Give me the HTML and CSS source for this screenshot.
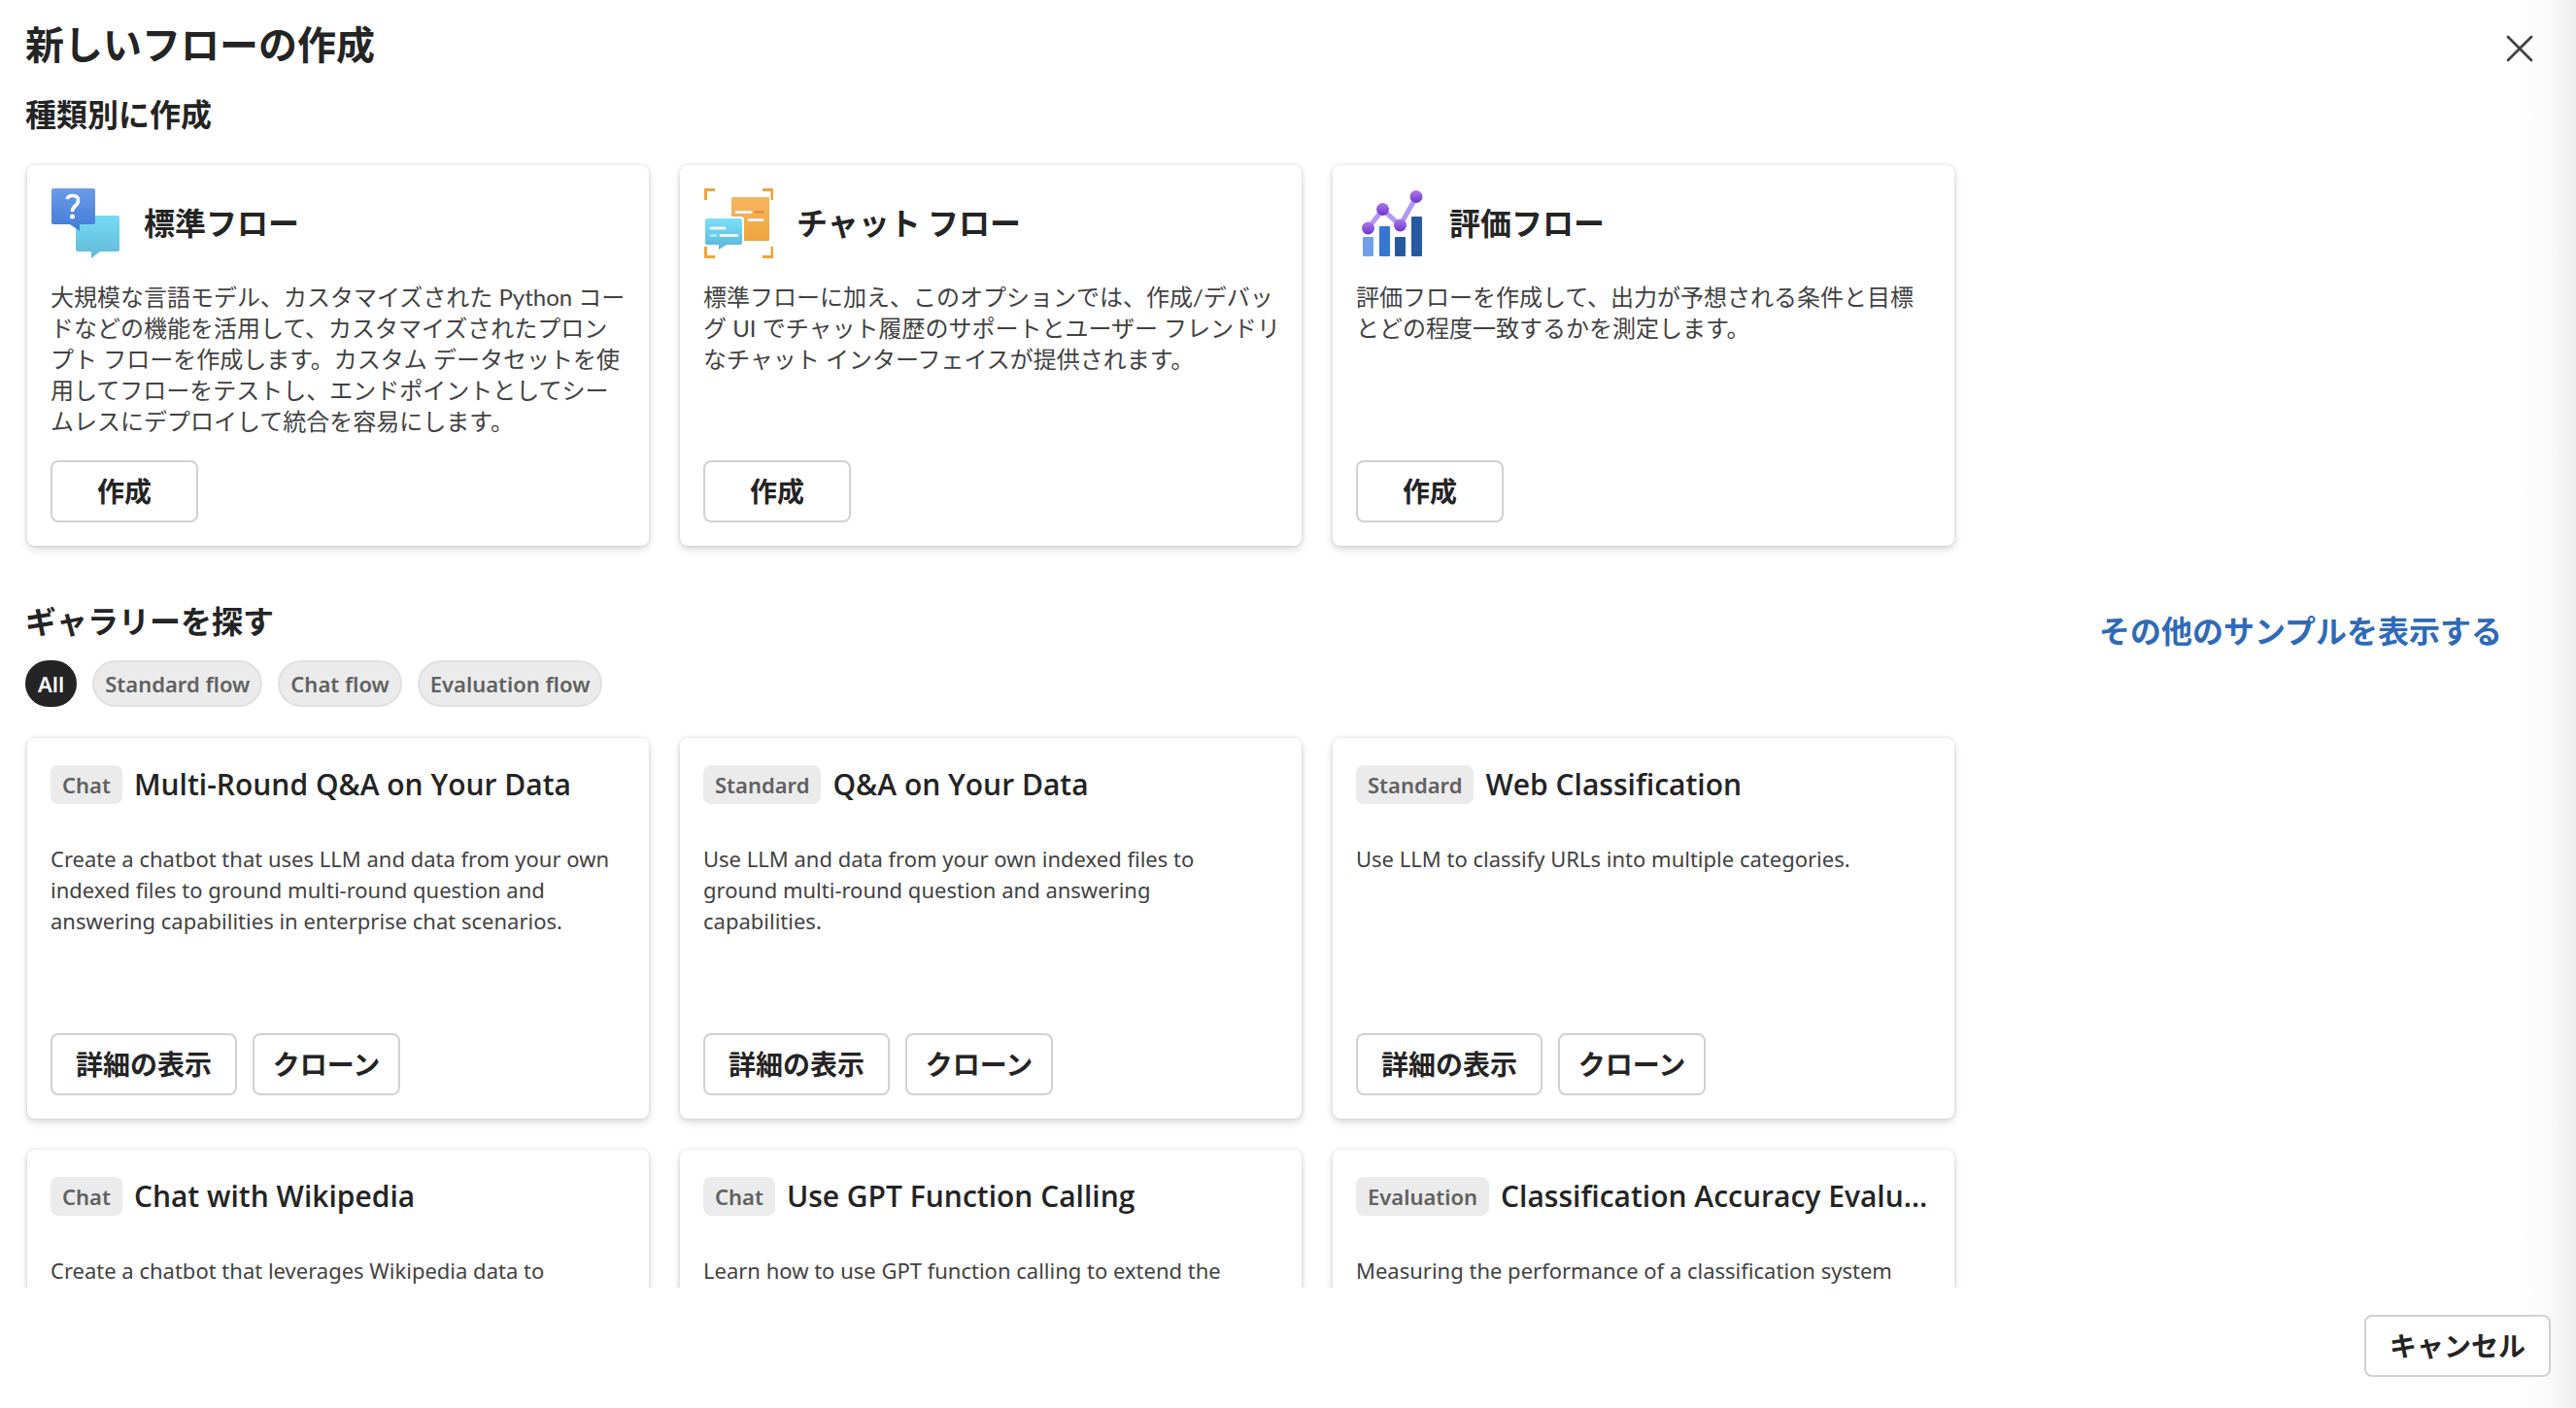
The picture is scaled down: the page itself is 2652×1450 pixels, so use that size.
FILE: index.html
```
<!DOCTYPE html>
<html lang="ja">
<head>
    <meta charset="UTF-8">
    <meta name="viewport" content="width=device-width, initial-scale=1.0">
    <title>新しいフローの作成</title>
    <link rel="stylesheet" href="styles.css">
</head>
<body>

<div class="panel">
    <header class="panel-header">
        <h1>新しいフローの作成</h1>
        <button type="button" class="close-btn" aria-label="閉じる">
            <svg viewBox="0 0 28 28" width="28" height="28"><path d="M2 2L26 26M26 2L2 26" fill="none" stroke="#424242" stroke-width="2.8" stroke-linecap="round"/></svg>
        </button>
    </header>

    <main class="panel-body">
        <h2>種類別に作成</h2>
        <div class="card-grid">
            <section class="card">
                <div class="card-head">
                    <svg class="flow-icon" viewBox="0 0 72 72">
                        <defs>
                            <linearGradient id="std-blue" x1="0" y1="0" x2="0" y2="1"><stop offset="0" stop-color="#6b9be8"/><stop offset="1" stop-color="#3f7bd6"/></linearGradient>
                            <linearGradient id="std-cyan" x1="0" y1="0" x2="0" y2="1"><stop offset="0" stop-color="#77dbf4"/><stop offset="1" stop-color="#62b9d9"/></linearGradient>
                        </defs>
                        <path d="M28 28H69Q71 28 71 30V63Q71 65 69 65H51L42 72V65H28Q26 65 26 63V30Q26 28 28 28Z" fill="url(#std-cyan)"/>
                        <path d="M3 0H44Q46 0 46 2V35Q46 37 44 37H30V44L20 37H3Q1 37 1 35V2Q1 0 3 0Z" fill="url(#std-blue)"/>
                        <path d="M17 11Q18 7.500 23 7.500Q28.500 7.500 28.500 12.500Q28.500 15.500 25.500 18Q22.500 20.500 22.500 24" fill="none" stroke="#fff" stroke-width="3.600"/>
                        <circle cx="22.500" cy="29" r="2.500" fill="#fff"/>
                    </svg>
                    <h3>標準フロー</h3>
                </div>
                <p class="desc">大規模な言語モデル、カスタマイズされた Python コードなどの機能を活用して、カスタマイズされたプロンプト フローを作成します。カスタム データセットを使用してフローをテストし、エンドポイントとしてシームレスにデプロイして統合を容易にします。</p>
                <div class="actions"><button type="button" class="btn">作成</button></div>
            </section>

            <section class="card">
                <div class="card-head">
                    <svg class="flow-icon" viewBox="0 0 72 72">
                        <defs>
                            <linearGradient id="chat-orange" x1="0" y1="0" x2="0" y2="1"><stop offset="0" stop-color="#f5b760"/><stop offset="1" stop-color="#efa43b"/></linearGradient>
                            <linearGradient id="chat-cyan" x1="0" y1="0" x2="0" y2="1"><stop offset="0" stop-color="#7ce0f9"/><stop offset="1" stop-color="#58b5d8"/></linearGradient>
                        </defs>
                        <path d="M2.500 12V1.500H12M61 1.500H71V12M2.500 60V70.500H12M61 70.500H71V60" fill="none" stroke="#efa43b" stroke-width="3"/>
                        <rect x="29" y="9" width="39" height="45" rx="1" fill="url(#chat-orange)"/>
                        <path d="M0 29H39Q42 29 42 32V58H0Z" fill="#fff"/>
                        <path d="M4 31H38Q40 31 40 33V56Q40 58 38 58H24L16 63V58H4Q2 58 2 56V33Q2 31 4 31Z" fill="url(#chat-cyan)"/>
                        <path d="M34 24.500H49M47 32.500H61M8 41H22M18 48.500H35" fill="none" stroke="#f2f2f2" stroke-width="3" stroke-linecap="round"/>
                        <path d="M54 24.500H61" fill="none" stroke="#e88f3a" stroke-width="3" stroke-linecap="round"/>
                        <path d="M8 48.500H13" fill="none" stroke="#a5e8f8" stroke-width="3" stroke-linecap="round"/>
                    </svg>
                    <h3>チャット フロー</h3>
                </div>
                <p class="desc">標準フローに加え、このオプションでは、作成/デバッグ UI でチャット履歴のサポートとユーザー フレンドリなチャット インターフェイスが提供されます。</p>
                <div class="actions"><button type="button" class="btn">作成</button></div>
            </section>

            <section class="card">
                <div class="card-head">
                    <svg class="flow-icon" viewBox="0 0 72 72">
                        <defs>
                            <linearGradient id="eval-dot" x1="0" y1="0" x2="0" y2="1"><stop offset="0" stop-color="#ad7bea"/><stop offset="1" stop-color="#6b34cf"/></linearGradient>
                        </defs>
                        <rect x="7" y="50" width="11" height="20" rx="1" fill="#6f9feb"/>
                        <rect x="24" y="39" width="11" height="31" rx="1" fill="#3477d0"/>
                        <rect x="40" y="50" width="11" height="20" rx="1" fill="#265a9e"/>
                        <rect x="57" y="29" width="11" height="41" rx="1" fill="#265a9e"/>
                        <path d="M12.500 41L27.500 22L45.500 38L62 9" fill="none" stroke="#b399f5" stroke-width="5"/>
                        <circle cx="12.500" cy="41" r="6.500" fill="url(#eval-dot)"/>
                        <circle cx="27.500" cy="21.500" r="6.500" fill="url(#eval-dot)"/>
                        <circle cx="45.500" cy="38" r="6.500" fill="url(#eval-dot)"/>
                        <circle cx="62" cy="8.500" r="6.500" fill="url(#eval-dot)"/>
                    </svg>
                    <h3>評価フロー</h3>
                </div>
                <p class="desc">評価フローを作成して、出力が予想される条件と目標とどの程度一致するかを測定します。</p>
                <div class="actions"><button type="button" class="btn">作成</button></div>
            </section>
        </div>

        <div class="gallery-head">
            <h2>ギャラリーを探す</h2>
            <a href="#" class="more-link">その他のサンプルを表示する</a>
        </div>
        <div class="filters">
            <button type="button" class="pill active">All</button>
            <button type="button" class="pill">Standard flow</button>
            <button type="button" class="pill">Chat flow</button>
            <button type="button" class="pill">Evaluation flow</button>
        </div>

        <div class="card-grid">
            <section class="card">
                <div class="sample-head"><span class="tag">Chat</span><h3>Multi-Round Q&amp;A on Your Data</h3></div>
                <p class="desc latin">Create a chatbot that uses LLM and data from your own indexed files to ground multi-round question and answering capabilities in enterprise chat scenarios.</p>
                <div class="actions">
                    <button type="button" class="btn btn-wide">詳細の表示</button>
                    <button type="button" class="btn">クローン</button>
                </div>
            </section>
            <section class="card">
                <div class="sample-head"><span class="tag">Standard</span><h3>Q&amp;A on Your Data</h3></div>
                <p class="desc latin">Use LLM and data from your own indexed files to ground multi-round question and answering capabilities.</p>
                <div class="actions">
                    <button type="button" class="btn btn-wide">詳細の表示</button>
                    <button type="button" class="btn">クローン</button>
                </div>
            </section>
            <section class="card">
                <div class="sample-head"><span class="tag">Standard</span><h3>Web Classification</h3></div>
                <p class="desc latin">Use LLM to classify URLs into multiple categories.</p>
                <div class="actions">
                    <button type="button" class="btn btn-wide">詳細の表示</button>
                    <button type="button" class="btn">クローン</button>
                </div>
            </section>
            <section class="card">
                <div class="sample-head"><span class="tag">Chat</span><h3>Chat with Wikipedia</h3></div>
                <p class="desc latin">Create a chatbot that leverages Wikipedia data to</p>
            </section>
            <section class="card">
                <div class="sample-head"><span class="tag">Chat</span><h3>Use GPT Function Calling</h3></div>
                <p class="desc latin">Learn how to use GPT function calling to extend the</p>
            </section>
            <section class="card">
                <div class="sample-head"><span class="tag">Evaluation</span><h3>Classification Accuracy Evaluation</h3></div>
                <p class="desc latin">Measuring the performance of a classification system</p>
            </section>
        </div>
    </main>

    <footer class="panel-footer">
        <button type="button" class="btn btn-wide">キャンセル</button>
    </footer>
</div>

</body>
</html>
```
FILE: styles.css
```
* {
    box-sizing: border-box;
}
body {
    margin: 0;
    background: #fff;
    color: #242424;
    font-family: "Noto Sans", "Noto Sans CJK JP", sans-serif;
}
h1, h2, h3, p {
    margin: 0;
}
h1, h2, h3, .btn, .more-link {
    font-family: "Noto Sans CJK JP", sans-serif;
    font-weight: 700;
}
h1 {
    font-size: 40px;
    line-height: 56px;
}
h2 {
    font-size: 32px;
    line-height: 44px;
}
h3 {
    font-size: 32px;
    line-height: 44px;
}
.panel {
    display: flex;
    flex-direction: column;
    height: 100vh;
    background: linear-gradient(to left, #eeeeee, #f7f7f7 20px, #fcfcfc 40px, #ffffff 64px);
}
.panel-header {
    display: flex;
    justify-content: space-between;
    padding: 16px 38px 0 26px;
}
.close-btn {
    width: 40px;
    height: 40px;
    margin-top: 14px;
    padding: 6px;
    border: 0;
    background: none;
}
.close-btn svg {
    display: block;
}
.panel-body {
    flex: 1;
    min-height: 0;
    overflow: hidden;
    padding: 22px 26px 0;
}
.card-grid {
    display: grid;
    grid-template-columns: repeat(auto-fill, 640px);
    gap: 32px;
    max-width: 2012px;
    margin-top: 32px;
    padding: 0 2px;
}
.card {
    display: flex;
    flex-direction: column;
    min-width: 0;
    min-height: 392px;
    padding: 24px 20px 24px 24px;
    border-radius: 8px;
    background: #fff;
    box-shadow: 0 0 4px rgba(0, 0, 0, 0.12), 0 4px 8px rgba(0, 0, 0, 0.14);
}
.card-head {
    display: flex;
    align-items: center;
    gap: 24px;
    margin-bottom: 24px;
}
.card-head h3 {
    padding-bottom: 4px;
}
.flow-icon {
    width: 72px;
    height: 72px;
}
.desc {
    color: #424242;
    font-family: Lato, "Noto Sans CJK JP", sans-serif;
    font-size: 24px;
    line-height: 32px;
}
.desc.latin {
    padding-right: 14px;
    font-family: "Noto Sans", sans-serif;
    font-size: 22px;
}
.actions {
    display: flex;
    gap: 16px;
    margin-top: auto;
}
.btn {
    min-width: 152px;
    height: 64px;
    padding: 0 18px 2px;
    border: 2px solid #d1d1d1;
    border-radius: 8px;
    background: #fff;
    color: #242424;
    font-size: 28px;
}
.btn-wide {
    min-width: 192px;
}
.gallery-head {
    display: flex;
    justify-content: space-between;
    align-items: flex-start;
    margin-top: 54px;
}
.more-link {
    margin-top: 10px;
    padding-right: 50px;
    color: #2f6ab8;
    font-size: 32px;
    line-height: 44px;
    text-decoration: none;
}
.filters {
    display: flex;
    gap: 16px;
    margin-top: 10px;
}
.pill {
    height: 48px;
    padding: 0 11px;
    border: 2px solid #e0e0e0;
    border-radius: 24px;
    background: #ebebeb;
    color: #616161;
    font-family: inherit;
    font-size: 22px;
    font-weight: 600;
}
.pill.active {
    border-color: #242424;
    background: #242424;
    color: #fff;
}
.sample-head {
    display: flex;
    align-items: center;
    gap: 12px;
    height: 48px;
    margin-bottom: 36px;
}
.sample-head h3 {
    overflow: hidden;
    font-family: "Open Sans", sans-serif;
    font-size: 30px;
    font-weight: 600;
    text-overflow: ellipsis;
    white-space: nowrap;
}
.tag {
    padding: 2px 12px;
    border-radius: 8px;
    background: #ebebeb;
    color: #616161;
    font-size: 22px;
    font-weight: 600;
    line-height: 36px;
}
.panel-footer {
    display: flex;
    justify-content: flex-end;
    padding: 28px 26px 32px;
}
```
